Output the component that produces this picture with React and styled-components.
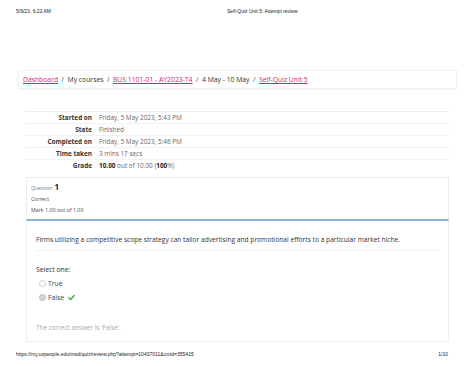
import styled, { createGlobalStyle } from "styled-components";

const GlobalStyle = createGlobalStyle`
    html, body {
        margin: 0;
        padding: 0;
        background: #fff;
    }
    body {
        font-family: "Open Sans", "Noto Sans", sans-serif;
        color: #1d2125;
    }
`

const summary = [
    { label: "Started on", value: "Friday, 5 May 2023, 5:43 PM" },
    { label: "State", value: "Finished" },
    { label: "Completed on", value: "Friday, 5 May 2023, 5:46 PM" },
    { label: "Time taken", value: "3 mins 17 secs" },
];

const App = () => {
    return (
        <>
            <GlobalStyle />
            <Page>
                <PrintHeader>
                    <span>5/9/23, 6:22 AM</span>
                    <HeaderTitle>Self-Quiz Unit 5: Attempt review</HeaderTitle>
                </PrintHeader>

                <Main>
                    <Breadcrumb>
                        <Crumb href="#">Dashboard</Crumb>
                        <Sep>/</Sep>
                        <span>My courses</span>
                        <Sep>/</Sep>
                        <Crumb href="#">BUS 1101-01 - AY2023-T4</Crumb>
                        <Sep>/</Sep>
                        <span>4 May - 10 May</span>
                        <Sep>/</Sep>
                        <Crumb href="#">Self-Quiz Unit 5</Crumb>
                    </Breadcrumb>

                    <Summary>
                        {summary.map((row) => (
                            <SummaryRow key={row.label}>
                                <SummaryLabel>{row.label}</SummaryLabel>
                                <SummaryValue>{row.value}</SummaryValue>
                            </SummaryRow>
                        ))}
                        <SummaryRow>
                            <SummaryLabel>Grade</SummaryLabel>
                            <SummaryValue>
                                <b>10.00</b> out of 10.00 (<b>100</b>%)
                            </SummaryValue>
                        </SummaryRow>
                    </Summary>

                    <Question>
                        <Info>
                            <QNo>Question <b>1</b></QNo>
                            <InfoLine>Correct</InfoLine>
                            <InfoLine>Mark 1.00 out of 1.00</InfoLine>
                        </Info>
                        <Content>
                            <QText>Firms utilizing a competitive scope strategy can tailor advertising and promotional efforts to a particular market niche.</QText>
                            <Prompt>Select one:</Prompt>
                            <Option>
                                <Radio />
                                True
                            </Option>
                            <Option>
                                <Radio $checked />
                                False
                                <Check viewBox="0 0 12 12">
                                    <path d="M1.5 6.5 L4.5 9.5 L10.5 2.5" fill="none" stroke="#39a935" strokeWidth="2.2" strokeLinecap="round" strokeLinejoin="round" />
                                </Check>
                            </Option>
                            <Feedback>The correct answer is 'False'.</Feedback>
                        </Content>
                    </Question>
                </Main>

                <PrintFooter>
                    <span>https://my.uopeople.edu/mod/quiz/review.php?attempt=10437011&cmid=355415</span>
                    <span>1/10</span>
                </PrintFooter>
            </Page>
        </>
    )
}

const Page = styled.div`
    width: 474px;
    height: 366px;
    display: flex;
    flex-direction: column;
    overflow: hidden;
`

const PrintHeader = styled.div`
    display: flex;
    align-items: center;
    height: 8px;
    padding: 7px 16px 0;
    font-family: "Liberation Sans", Arial, sans-serif;
    font-size: 5px;
    color: #222;
`

const HeaderTitle = styled.span`
    margin-left: 176px;
`

const Main = styled.div`
    flex: 1;
    padding: 55px 17px 0 18px;
    display: flex;
    flex-direction: column;
`

const Breadcrumb = styled.nav`
    display: flex;
    align-items: center;
    height: 19px;
    padding: 0 4px;
    border: 1px solid #f0f0f0;
    box-shadow: 0 1px 2px rgba(0, 0, 0, 0.04);
    font-size: 6.8px;
    color: #333;
    box-sizing: border-box;
`

const Crumb = styled.a`
    color: #d6246e;
    text-decoration: underline;
`

const Sep = styled.span`
    margin: 0 3.5px;
    color: #444;
`

const Summary = styled.div`
    margin: 22px 8px 0 7px;
    border-top: 1px solid #ececec;
    display: flex;
    flex-direction: column;
`

const SummaryRow = styled.div`
    display: grid;
    grid-template-columns: 67px 1fr;
    column-gap: 7px;
    height: 11px;
    align-items: center;
    border-bottom: 1px solid #f1f1f1;
    font-size: 6.4px;
    &:last-child {
        border-bottom: none;
    }
`

const SummaryLabel = styled.div`
    text-align: right;
    font-weight: 700;
    color: #333;
`

const SummaryValue = styled.div`
    color: #666;
    b {
        color: #222;
        font-weight: 700;
    }
`

const Question = styled.div`
    margin: 6px 8px 0 8px;
    display: flex;
    flex-direction: column;
`

const Info = styled.div`
    border: 1px solid #ededed;
    border-bottom: 2px solid #8cb1d8;
    padding: 3px 4px 5px;
    display: flex;
    flex-direction: column;
    gap: 3px;
`

const QNo = styled.div`
    font-size: 5px;
    color: #777;
    b {
        font-size: 8px;
        color: #222;
        margin-left: 1px;
    }
`

const InfoLine = styled.div`
    font-size: 5.3px;
    color: #444;
`

const Content = styled.div`
    border: 1px solid #ededed;
    border-top: none;
    padding: 14px 8px 9px 9px;
    display: flex;
    flex-direction: column;
    height: 121px;
    box-sizing: border-box;
`

const QText = styled.div`
    font-size: 6.65px;
    color: #333;
    padding-bottom: 6px;
    border-bottom: 1px solid #f0f0f0;
`

const Prompt = styled.div`
    margin-top: 14px;
    font-size: 6.8px;
    color: #333;
`

const Option = styled.div`
    display: flex;
    align-items: center;
    gap: 2px;
    margin-top: 5px;
    margin-left: 3px;
    font-size: 6.8px;
    color: #444;
`

const Radio = styled.span`
    width: 5px;
    height: 5px;
    border-radius: 50%;
    border: 1px solid ${p => p.$checked ? "#bbb" : "#ccc"};
    background: ${p => p.$checked ? "#d5d5d5" : "#fff"};
`

const Check = styled.svg`
    width: 7px;
    height: 7px;
    margin-left: 2px;
`

const Feedback = styled.div`
    margin-top: auto;
    font-size: 6.4px;
    color: #aaa;
`

const PrintFooter = styled.div`
    display: flex;
    justify-content: space-between;
    padding: 0 26px 9px 16px;
    font-family: "Liberation Sans", Arial, sans-serif;
    font-size: 5px;
    color: #222;
`

export default App;
